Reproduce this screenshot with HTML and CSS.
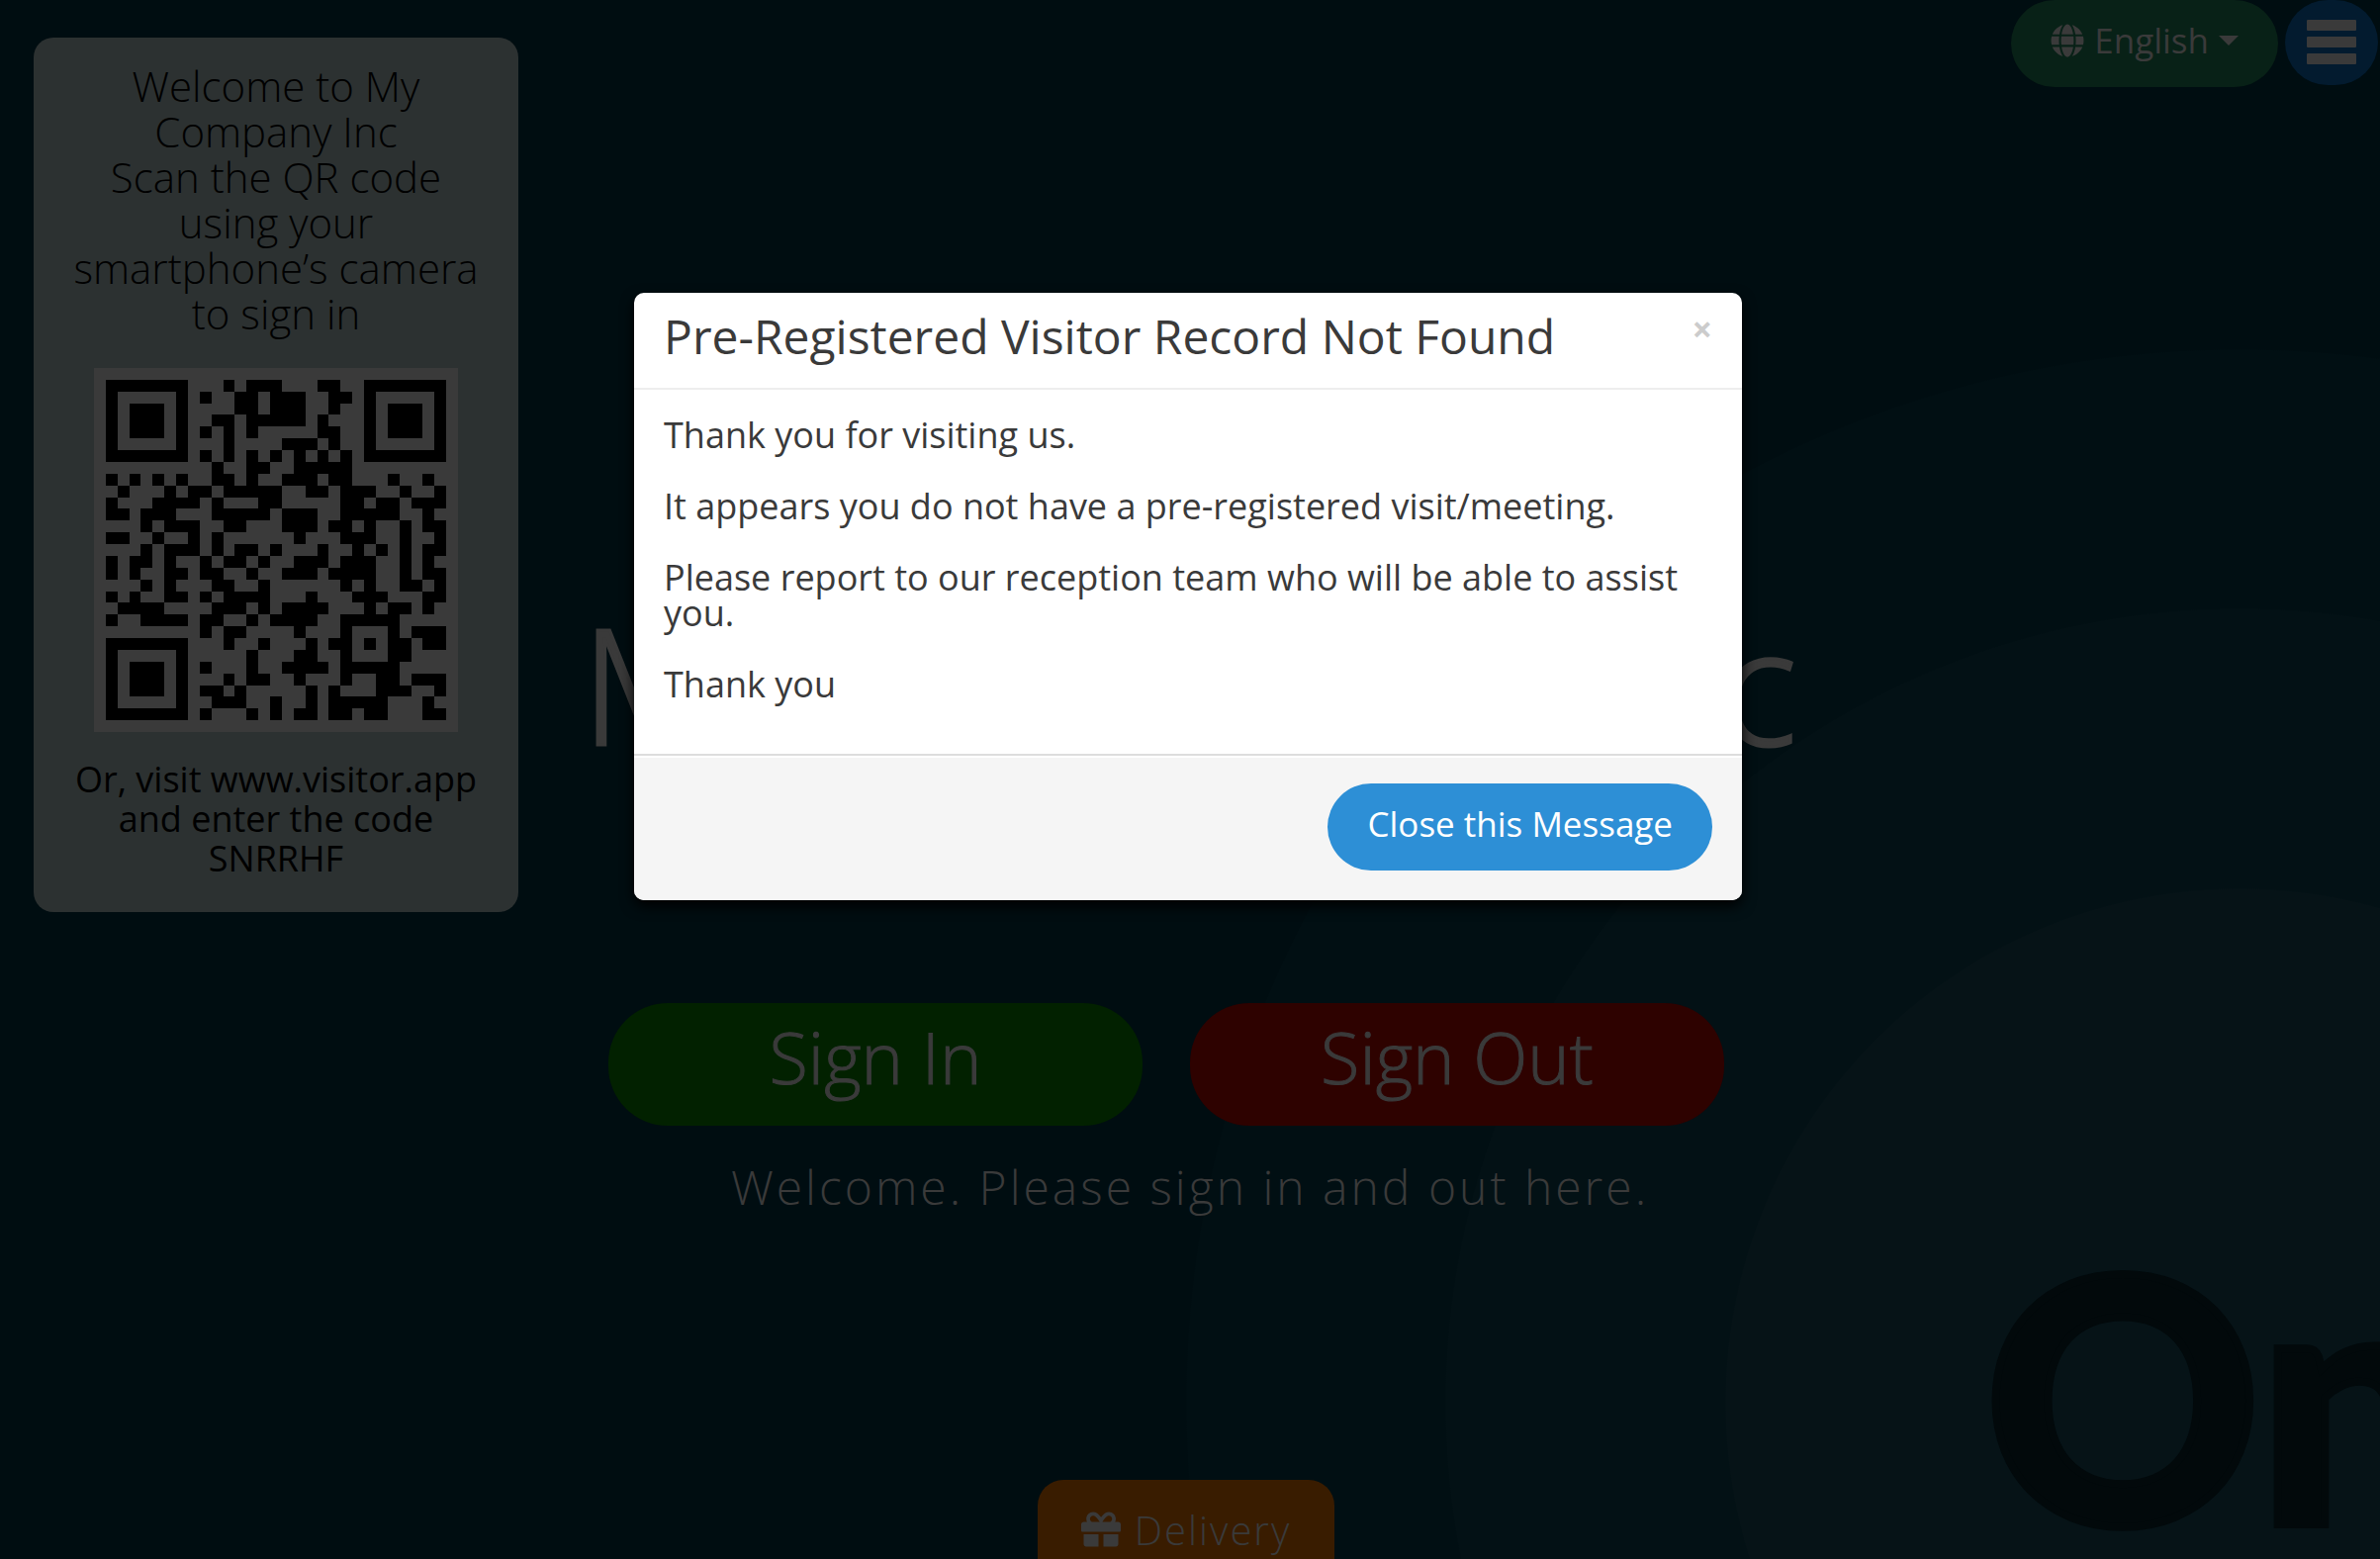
FILE: index.html
```html
<!DOCTYPE html>
<html lang="en">
<head>
<meta charset="utf-8">
<meta name="viewport" content="width=device-width, initial-scale=1">
<title>My Company Inc</title>
<link rel="stylesheet" href="styles.css">
</head>
<body>
<div class="page">
  <div class="backdrop-word" aria-hidden="true">On</div>

  <header class="topbar">
    <button class="btn lang" type="button">
      <svg class="globe" viewBox="0 0 496 512" aria-hidden="true"><path d="M336.500 160C322 70.700 287.800 8 248 8s-74 62.700-88.500 152h177zM152 256c0 22.200 1.200 43.500 3.300 64h185.300c2.100-20.500 3.300-41.800 3.300-64s-1.200-43.500-3.300-64H155.300c-2.100 20.500-3.300 41.800-3.300 64zm324.700-96c-28.600-67.900-86.500-120.400-158-141.600 24.400 33.800 41.200 84.700 50 141.600h108zM177.200 18.400C105.800 39.600 47.800 92.100 19.300 160h108c8.700-56.900 25.500-107.800 49.900-141.600zM487.400 192H372.700c2.100 21 3.300 42.500 3.300 64s-1.200 43-3.300 64h114.600c5.500-20.500 8.600-41.800 8.600-64s-3.100-43.500-8.500-64zM120 256c0-21.500 1.200-43 3.300-64H8.600C3.200 212.500 0 233.800 0 256s3.200 43.500 8.600 64h114.600c-2-21-3.200-42.500-3.200-64zm39.500 96c14.500 89.300 48.700 152 88.500 152s74-62.700 88.500-152h-177zm159.300 141.600c71.400-21.200 129.400-73.700 158-141.600h-108c-8.800 56.900-25.600 107.800-50 141.600zM19.300 352c28.600 67.900 86.500 120.400 158 141.600-24.400-33.800-41.200-84.700-50-141.600h-108z"/></svg>
      <span>English</span>
      <i class="caret"></i>
    </button>
    <button class="menu" type="button" aria-label="Menu"><i></i><i></i><i></i></button>
  </header>

  <aside class="scan">
    <p class="scan-intro">Welcome to My<br>Company Inc<br>Scan the QR code<br>using your<br>smartphone’s camera<br>to sign in</p>
    <svg class="qr" viewBox="0 0 31 31" role="img" aria-label="QR code">
      <path transform="translate(1 1.5)" d="M0 0h7M10 0h1M12 0h3M18 0h2M22 0h7
M0 1h1M6 1h1M8 1h1M11 1h2M14 1h3M19 1h2M22 1h1M28 1h1
M0 2h1M2 2h3M6 2h1M11 2h2M14 2h3M19 2h1M22 2h1M24 2h3M28 2h1
M0 3h1M2 3h3M6 3h1M9 3h2M12 3h5M18 3h1M22 3h1M24 3h3M28 3h1
M0 4h1M2 4h3M6 4h1M8 4h1M10 4h1M12 4h1M18 4h2M22 4h1M24 4h3M28 4h1
M0 5h1M6 5h1M10 5h1M15 5h3M19 5h1M22 5h1M28 5h1
M0 6h7M8 6h1M10 6h1M12 6h1M14 6h1M16 6h1M18 6h1M20 6h1M22 6h7
M9 7h1M12 7h2M16 7h5
M0 8h1M2 8h1M4 8h1M6 8h1M9 8h2M12 8h1M15 8h3M19 8h2M24 8h1M27 8h1
M1 9h1M5 9h1M7 9h2M10 9h5M17 9h2M20 9h3M25 9h1M28 9h1
M0 10h1M4 10h4M9 10h1M13 10h2M20 10h2M23 10h2M26 10h3
M0 11h2M3 11h3M9 11h5M15 11h3M20 11h5M27 11h1
M3 12h1M5 12h3M10 12h2M15 12h3M19 12h2M22 12h1M25 12h1M27 12h2
M0 13h2M4 13h1M7 13h1M9 13h1M16 13h1M20 13h3M25 13h1M28 13h1
M3 14h1M5 14h3M9 14h1M11 14h2M14 14h1M18 14h1M21 14h1M23 14h1M25 14h1M27 14h2
M0 15h1M2 15h2M5 15h1M8 15h1M10 15h2M13 15h1M16 15h3M20 15h3M25 15h1M27 15h1
M0 16h1M2 16h1M5 16h2M8 16h2M12 16h1M15 16h3M19 16h4M25 16h1M27 16h2
M3 17h1M5 17h1M9 17h2M13 17h1M20 17h1M22 17h1M25 17h2M28 17h1
M0 18h1M2 18h1M5 18h2M8 18h1M10 18h4M17 18h1M21 18h3M27 18h2
M1 19h4M9 19h3M13 19h1M15 19h4M22 19h1M24 19h2M27 19h1
M0 20h1M3 20h4M8 20h2M12 20h1M14 20h4M20 20h5
M8 21h1M10 21h2M16 21h1M20 21h1M24 21h1M26 21h3
M0 22h7M10 22h1M13 22h1M17 22h1M19 22h2M22 22h1M24 22h2M27 22h2
M0 23h1M6 23h1M12 23h1M16 23h2M20 23h1M24 23h2
M0 24h1M2 24h3M6 24h1M8 24h1M12 24h1M15 24h4M20 24h5
M0 25h1M2 25h3M6 25h1M10 25h1M12 25h2M16 25h1M20 25h1M23 25h2M26 25h3
M0 26h1M2 26h3M6 26h1M8 26h2M11 26h1M17 26h1M19 26h1M23 26h3M28 26h1
M0 27h1M6 27h1M9 27h3M14 27h1M17 27h1M19 27h5M27 27h1
M0 28h7M8 28h1M12 28h1M14 28h1M16 28h2M19 28h2M22 28h2M27 28h2"/>
    </svg>
    <p class="scan-code">Or, visit www.visitor.app<br>and enter the code<br>SNRRHF</p>
  </aside>

  <main class="welcome">
    <h1>My Company Inc</h1>
    <div class="actions">
      <button class="big in" type="button">Sign In</button>
      <button class="big out" type="button">Sign Out</button>
    </div>
    <p class="hint">Welcome. Please sign in and out here.</p>
  </main>

  <button class="delivery" type="button">
    <svg class="gift" viewBox="0 32 512 448" aria-hidden="true"><path d="M32 448c0 17.700 14.300 32 32 32h160V320H32v128zm256 32h160c17.700 0 32-14.300 32-32V320H288v160zm192-320h-42.100c6.200-12.100 10.100-25.500 10.100-40 0-48.500-39.500-88-88-88-41.600 0-68.500 21.300-103 68.300-34.500-47-61.400-68.300-103-68.300-48.500 0-88 39.500-88 88 0 14.500 3.800 27.900 10.100 40H32c-17.700 0-32 14.300-32 32v80c0 8.800 7.200 16 16 16h480c8.800 0 16-7.200 16-16v-80c0-17.700-14.300-32-32-32zm-326.100 0c-22.100 0-40-17.900-40-40s17.900-40 40-40c19.900 0 34.600 3.300 86.100 80h-86.100zm206.100 0h-86.100c51.400-76.500 65.700-80 86.100-80 22.100 0 40 17.900 40 40s-17.900 40-40 40z"/></svg>
    <span>Delivery</span>
  </button>

  <section class="modal" role="dialog" aria-labelledby="modal-title">
    <header class="modal-header">
      <h2 id="modal-title">Pre-Registered Visitor Record Not Found</h2>
      <button class="dismiss" type="button" aria-label="Close">×</button>
    </header>
    <div class="modal-body">
      <p>Thank you for visiting us.</p>
      <p>It appears you do not have a pre-registered visit/meeting.</p>
      <p>Please report to our reception team who will be able to assist you.</p>
      <p>Thank you</p>
    </div>
    <footer class="modal-footer">
      <button class="btn close-message" type="button">Close this Message</button>
    </footer>
  </section>
</div>
</body>
</html>
```
FILE: styles.css
```css
* { box-sizing: border-box; }

body {
  margin: 0;
  background: #000d11;
  color: #3a3a3a;
  font-family: "Open Sans", "Noto Sans", sans-serif;
}

h1, h2, p { margin: 0; font-weight: 400; }

button {
  border: 0;
  padding: 0;
  font-family: inherit;
  cursor: pointer;
}

.page {
  position: relative;
  display: grid;
  grid-template: auto 1fr auto / 1fr;
  min-height: 100vh;
  overflow: hidden;
  background: radial-gradient(circle at calc(100% - 142px) calc(100% - 158px),
    #061317 519px, #031115 520px, #031115 802px,
    #010f13 803px, #010f13 1064px, #000d11 1065px);
}

.backdrop-word {
  position: absolute;
  left: calc(100% - 400px);
  bottom: -38px;
  font: 900 345px/1.2 Lato, sans-serif;
  color: #02090b;
  -webkit-text-stroke: 8px #02090b;
}

.topbar {
  grid-area: 1 / 1;
  display: flex;
  justify-content: flex-end;
  align-items: flex-start;
  gap: 7px;
  padding-right: 2px;
}

.btn {
  height: 88px;
  padding: 0 40px 6px;
  border-radius: 44px;
  font-size: 35px;
  line-height: 40px;
}

.lang {
  display: flex;
  align-items: center;
  gap: 10px;
  background: #082117;
  color: #3a3a3a;
}

.globe { width: 34px; height: 34px; fill: currentColor; }

.caret {
  border: 10px solid transparent;
  border-top-color: currentColor;
  border-bottom: 0;
}

.menu {
  display: flex;
  flex-direction: column;
  align-items: center;
  justify-content: center;
  gap: 6px;
  width: 94px;
  height: 86px;
  padding-bottom: 2px;
  border-radius: 44px;
  background: #031b2f;
}

.menu i { width: 50px; height: 11px; border-radius: 1px; background: #3a3a3a; }

.scan {
  grid-area: 1 / 1 / 3 / 2;
  place-self: start;
  width: 490px;
  margin: 38px 0 0 34px;
  padding: 26px 20px 34px;
  border-radius: 20px;
  background: #2c3131;
  color: #000;
  text-align: center;
  white-space: nowrap;
}

.scan-intro { font-size: 42px; font-weight: 300; line-height: 46px; }

.qr {
  display: block;
  width: 368px;
  height: 368px;
  margin: 32px auto 28px;
  background: #3a3a3a;
  shape-rendering: crispEdges;
}

.qr path { stroke: #000; fill: none; }

.scan-code { font-size: 36px; line-height: 40px; }

.welcome {
  grid-area: 2 / 1;
  padding: 502px 0 60px;
  text-align: center;
}

.welcome h1 {
  font-size: 162px;
  font-weight: 300;
  line-height: 200px;
  letter-spacing: 2px;
  -webkit-text-stroke: 3px currentColor;
}

.actions { display: flex; justify-content: center; margin-top: 224px; }

.big {
  width: 540px;
  height: 124px;
  margin-right: 48px;
  padding-bottom: 16px;
  border-radius: 60px;
  color: #3a3a3a;
  font-size: 72px;
  font-weight: 300;
  line-height: 80px;
  -webkit-text-stroke: 1px currentColor;
}

.in { background: #022100; }
.out { background: #2e0200; }

.hint {
  margin-top: 32px;
  font-size: 48px;
  font-weight: 300;
  line-height: 60px;
  letter-spacing: 3px;
}

.delivery {
  grid-area: 3 / 1;
  justify-self: center;
  display: flex;
  justify-content: center;
  align-items: center;
  gap: 14px;
  width: 300px;
  height: 80px;
  margin-right: 8px;
  padding-top: 20px;
  border-radius: 26px 26px 0 0;
  background: #391c00;
  color: #3a3a3a;
  font-size: 40px;
  font-weight: 300;
  letter-spacing: 2px;
}

.gift { width: 40px; height: 36px; fill: currentColor; }

.modal {
  position: absolute;
  top: 296px;
  left: 50%;
  width: 1120px;
  margin-left: -562px;
  border-radius: 10px;
  overflow: hidden;
  background: #fff;
  color: #3a3a3a;
  box-shadow: 0 6px 14px #000;
}

.modal-header {
  display: flex;
  justify-content: space-between;
  align-items: flex-start;
  padding: 14px 30px 22px;
  border-bottom: 2px solid #eee;
}

.modal-header h2 { font-size: 48px; line-height: 60px; }

.dismiss {
  background: none;
  color: #ccc;
  font-size: 36px;
  font-weight: 700;
  line-height: 46px;
}

.modal-body { padding: 28px 30px 52px; }
.modal-body p { font-size: 36px; line-height: 36px; }
.modal-body p + p { margin-top: 36px; }

.modal-footer {
  display: flex;
  justify-content: flex-end;
  padding: 28px 30px 30px;
  border-top: 2px solid #ddd;
  background: #f5f5f5;
  box-shadow: inset 0 2px 0 #fff;
}

.close-message { background: #2d8fd6; color: #fff; }
```
